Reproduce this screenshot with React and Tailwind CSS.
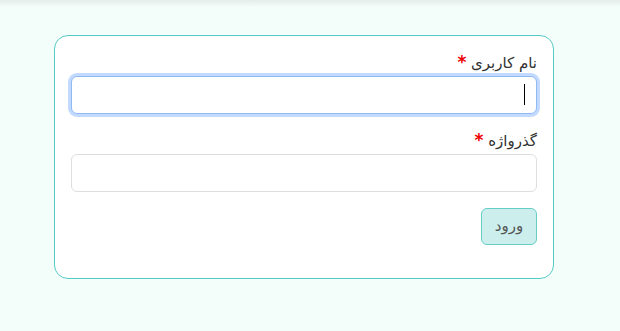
import React from "react";

const Field = ({ label, focused }) => {
  return (
    <div className="flex flex-col">
      <label className="h-[22px] text-[15px] leading-[22px] text-[#333] mb-[2px]">
        {label}{" "}
        <span className="text-[#ee0000] text-[17px] leading-none font-bold">*</span>
      </label>
      <div className="relative">
        <input
          type="text"
          dir="rtl"
          className={
            focused
              ? "w-full h-[38px] rounded-[6px] border border-[#8fb8f5] bg-white px-3 outline-none ring-[3px] ring-[#c2dafd]"
              : "w-full h-[38px] rounded-[6px] border border-[#dedede] bg-white px-3 outline-none"
          }
        />
        {focused && (
          <span className="absolute right-[12px] top-[8px] w-[1px] h-[21px] bg-black" />
        )}
      </div>
    </div>
  );
};

export default function App() {
  return (
    <div
      dir="rtl"
      className="min-h-[331px] bg-[#f3fdf9]"
      style={{ fontFamily: '"DejaVu Sans", "Noto Sans", sans-serif' }}
    >
      <div className="h-[7px] bg-gradient-to-b from-[#e5edeb] to-[#f3fdf9]" />
      <div className="flex pr-[66px] pt-[28px]">
        <div className="w-[500px] rounded-[14px] border border-[#55cbc6] bg-white px-4 pt-4 pb-[33px]">
          <div className="flex flex-col gap-4">
            <Field label="نام کاربری" focused />
            <Field label="گذرواژه" />
            <div className="flex">
              <button className="h-[37px] w-[56px] rounded-[6px] border border-[#66cdc6] bg-[#ccefee] text-[15px] text-[#555]">
                ورود
              </button>
            </div>
          </div>
        </div>
      </div>
    </div>
  );
}
